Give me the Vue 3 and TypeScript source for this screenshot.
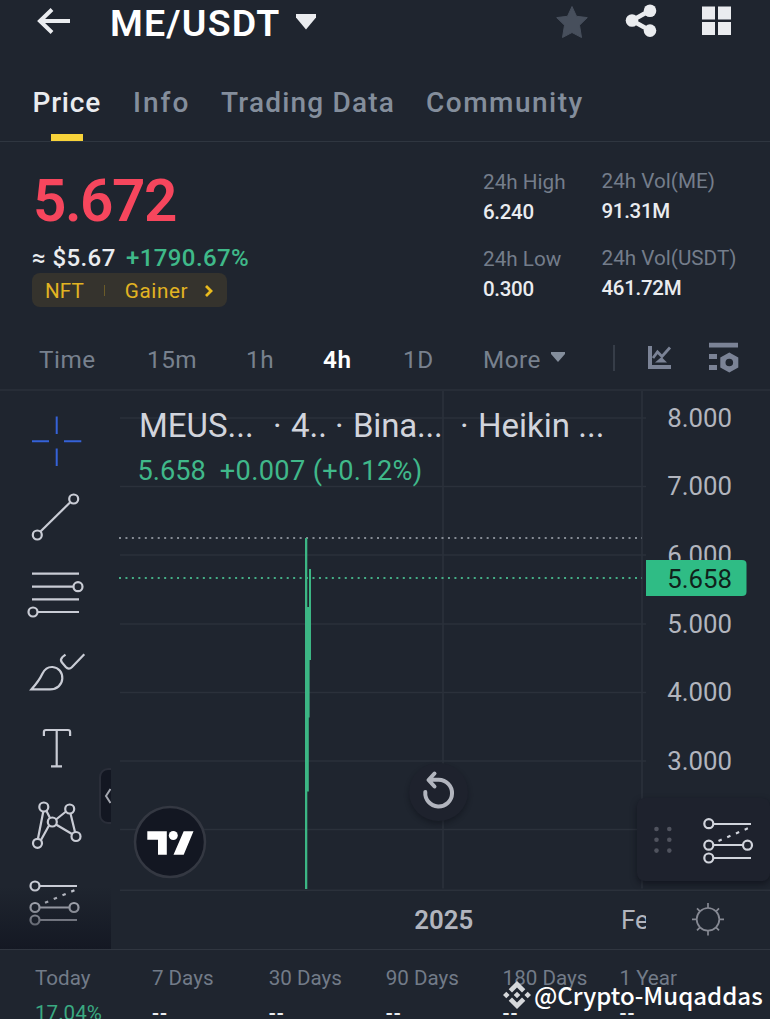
<script setup lang="ts">
interface Tool {
  name: string
  top: number
  paths: string[]
  dots?: string
  rings: [number, number][]
}

const tabs: string[] = ['Price', 'Info', 'Trading Data', 'Community']

const stats: [string, string][][] = [
  [['24h High', '6.240'], ['24h Low', '0.300']],
  [['24h Vol(ME)', '91.31M'], ['24h Vol(USDT)', '461.72M']],
]

const intervals: string[] = ['Time', '15m', '1h', '4h', '1D']

const tools: Tool[] = [
  { name: 'cross', top: 403, paths: ['M56.7 416.5V434M56.7 448.5V466M32 441.3H49M64 441.3H81.300'], rings: [] },
  { name: 'trend', top: 480, paths: ['M40.500 531.500L70 502.500'], rings: [[37.3, 535], [73.7, 499]] },
  { name: 'fib', top: 557, paths: ['M32 573.7H79M32 586.7H73.500M32 599.3H79M38 612H79'], rings: [[78, 586.7], [33, 612]] },
  {
    name: 'brush', top: 634, rings: [],
    paths: [
      'M31.500 689.300C38 682 40 679 42.500 673.500C45 668.500 49 666.800 52.500 667C59 667.500 62.500 672.500 62.300 678.500C62 685 57 689.300 50 689.300Z',
      'M65.500 654.700L62.500 657C60.600 658.800 60.500 660.500 61.800 662.300L65.800 667C67.600 669 70 669 71.800 667.300L84.300 654.300',
    ],
  },
  { name: 'text', top: 711, paths: ['M43.900 736V732Q43.900 730 46 730H68Q70.100 730 70.100 732V736M56.700 730V766.300M51 766.300H62'], rings: [] },
  {
    name: 'pattern', top: 788,
    paths: ['M46.500 811L50 818M56 819.500L66 811.500M43.300 811.500L38 838.500M41 840L49 825.500M56 824.500L72 834M70.500 813.500L75 832'],
    rings: [[43.8, 807], [69.7, 809], [52.3, 822], [37.500, 843.300], [76, 836.500]],
  },
  { name: 'projection', top: 865, paths: ['M40 886H77M40 907.500H69M40 920H77'], dots: 'M45 902.800L75 890', rings: [[35, 886], [35, 907.500], [74, 907.500], [35, 920]] },
]

const priceLabels = [8, 7, 6, 5, 4, 3].map((v, i) => ({ text: v.toFixed(3), y: 426.800 + i * 68.6 }))
const gridRows: number[] = [418, 486.500, 555, 624, 692.500, 761, 829.500]

const periods: [string, string][] = [
  ['Today', '17.04%'], ['7 Days', '--'], ['30 Days', '--'],
  ['90 Days', '--'], ['180 Days', '--'], ['1 Year', '--'],
]
</script>

<template>
  <div class="screen">
    <header class="header">
      <svg class="back" width="34" height="28" viewBox="37 7 34 28"><path d="M70 21H41M52 9.500L40 21L52 32.500" fill="none" stroke="#eaecef" stroke-width="4" /></svg>
      <h1>ME/USDT</h1>
      <svg class="caret" width="20" height="16" viewBox="0 0 20 16"><path d="M0 0H20V3.500L10 15.500L0 3.500Z" fill="#eaecef" /></svg>
      <svg class="star" width="34" height="34" viewBox="0 0 34 34"><path d="M17 1.500L21.500 11.300L32.300 12.600L24.500 20.200L26.500 32.500L17 27.500L7.500 32.500L9.500 20.200L1.700 12.600L12.500 11.300Z" fill="#474f5c" stroke="#474f5c" stroke-linejoin="round" /></svg>
      <svg class="share" width="32" height="34" viewBox="0 0 32 34"><path d="M25 6.500L7 16.500L25 26.500" fill="none" stroke="#eaecef" stroke-width="4.500" /><g fill="#eaecef"><circle cx="7" cy="16.500" r="6.300" /><circle cx="25" cy="6.800" r="6.300" /><circle cx="25" cy="26.600" r="6.300" /></g></svg>
      <svg class="apps" width="30" height="30" viewBox="0 0 30 30"><path d="M0 .5H13V13.500H0ZM16 .5H29V13.500H16ZM0 16H13V29H0ZM16 16H29V29H16Z" fill="#eaecef" /></svg>
    </header>

    <nav class="tabs">
      <span v-for="(tab, i) in tabs" :key="tab" :class="['tab', 'tab-' + i, { active: i === 0 }]">{{ tab }}</span>
    </nav>

    <section class="ticker">
      <div class="quote">
        <div class="price">5.672</div>
        <div class="sub"><span class="fiat">≈ $5.67</span><span class="change">+1790.67%</span></div>
        <div class="badge">
          <span>NFT</span><i></i><span class="gainer">Gainer</span>
          <svg width="10" height="14" viewBox="0 0 10 14"><path d="M2 2L7 7L2 12" fill="none" stroke="#eabb1e" stroke-width="2.800" /></svg>
        </div>
      </div>
      <div v-for="(col, c) in stats" :key="c" class="stats">
        <dl v-for="item in col" :key="item[0]"><dt>{{ item[0] }}</dt><dd>{{ item[1] }}</dd></dl>
      </div>
    </section>

    <nav class="intervals">
      <span v-for="item in intervals" :key="item" :class="{ on: item === '4h' }">{{ item }}</span>
      <span class="more">More<svg width="14" height="10" viewBox="0 0 14 10"><path d="M0 0H14V2L7 10L0 2Z" fill="#848e9c" /></svg></span>
      <i class="divider"></i>
      <svg width="25" height="25" viewBox="647 344 25 25"><g fill="none" stroke="#7b8396"><path d="M650 345V366H671" stroke-width="4" /><path d="M653 357L657.500 351L662 355.500L670 346.500" stroke-width="2.800" /></g><path d="M655 361.500L661.500 356L667 361.500Z" fill="#7b8396" /></svg>
      <svg width="32" height="32" viewBox="708 341 32 32"><path fill="#7b8396" fill-rule="evenodd" d="M709 342.700H738V347.500H709ZM709 354H717V359H709ZM709 365H717V370H709ZM729.300 352.500L738.300 357.500V367.500L729.300 372.500L720.300 367.500V357.500ZM729.300 358.700A3.800 3.800 0 1 0 729.300 366.300A3.800 3.800 0 1 0 729.300 358.700Z" /></svg>
    </nav>

    <section class="chart">
      <aside class="toolbox">
        <svg v-for="tool in tools" :key="tool.name" :class="['tool', tool.name]" width="111" height="77" :viewBox="`0 ${tool.top} 111 77`">
          <path v-for="d in tool.paths" :key="d" :d="d" />
          <path v-if="tool.dots" :d="tool.dots" class="dashes" />
          <circle v-for="(r, i) in tool.rings" :key="i" :cx="r[0]" :cy="r[1]" r="4.500" />
        </svg>
        <div class="fade"></div>
        <div class="collapse"><svg width="8" height="18" viewBox="0 0 8 18"><path d="M6.500 2L2 9L6.500 16" fill="none" stroke="#a3a6af" stroke-width="2" /></svg></div>
      </aside>
      <div class="plot">
        <svg class="canvas" width="659" height="558" viewBox="111 391 659 558">
          <g stroke="#2b313b" stroke-width="1.600">
            <path v-for="y in gridRows" :key="y" :d="`M120 ${y}H646`" />
            <path d="M443 391V888.500M642 391V888.500M120 890.300H770" />
          </g>
          <path d="M119 538H642" stroke="#858b94" stroke-width="2" stroke-dasharray="2 4.450" />
          <path d="M119 578H642" stroke="#44ae86" stroke-width="2" stroke-dasharray="2 4.450" />
          <path d="M305 538H307.300V607H309V569H311V660H309.600V717.500H308.800V791.500H307.300V889H305Z" fill="#3cb684" />
          <g class="axis">
            <text v-for="label in priceLabels" :key="label.text" x="667.300" :y="label.y">{{ label.text }}</text>
            <text x="414.300" y="929" class="year">2025</text>
          </g>
          <svg x="611" y="900" width="35" height="40"><text x="10" y="29" class="month">Feb</text></svg>
          <path d="M646 560H742Q746.500 560 746.500 564V592Q746.500 596 742 596H646Z" fill="#2fbc85" />
          <text x="667.300" y="587.500" class="last">5.658</text>
          <circle cx="170" cy="842" r="35" fill="#131722" stroke="#343842" stroke-width="2.500" />
          <g fill="#fff"><path d="M147.300 831.300H166.800V854.800H158V839.800H147.300ZM183.700 831.300H193.500L183.700 854.800H173.500Z" /><circle cx="173.300" cy="835.500" r="4.500" /></g>
          <g fill="none" stroke="#868993" stroke-width="1.700">
            <circle cx="708" cy="919.300" r="11.300" />
            <path d="M708 908V903M708 930.600V935.600M696.700 919.300H692M719.300 919.300H724M700 911.300L697 908.300M716 911.300L719 908.300M700 927.300L697 930.300M716 927.300L719 930.300" />
          </g>
        </svg>
        <div class="legend">
          <span class="sym">MEUS...</span><span class="sep">·</span><span class="res">4..</span><span class="sep">·</span><span class="exch">Bina...</span><span class="sep">·</span><span class="style">Heikin ...</span>
        </div>
        <div class="values"><span>5.658</span><span class="delta">+0.007 (+0.12%)</span></div>
        <div class="reset">
          <svg width="34" height="40" viewBox="422 770 34 40"><path d="M425.300 792A13.400 13.400 0 1 0 438.700 779.700H430M434.500 773.500L428.500 780L434.500 786.500" fill="none" stroke="#b2b5be" stroke-width="4" stroke-linecap="round" stroke-linejoin="round" /></svg>
        </div>
        <div class="floating">
          <svg width="133" height="83" viewBox="637 798 133 83">
            <g fill="#50535e"><circle v-for="n in 6" :key="n" :cx="n % 2 ? 656.500 : 669.300" :cy="829 + Math.floor((n - 1) / 2) * 10.800" r="2.300" /></g>
            <g fill="none" stroke="#d1d4dc" stroke-width="2.200"><path d="M713.500 824H751M713.500 845H743M713.500 858H751" /><path d="M718.500 841L749 827.800" stroke-dasharray="3.500 6" /><circle cx="708.800" cy="823.700" r="4.500" /><circle cx="708.800" cy="845.200" r="4.500" /><circle cx="747.500" cy="845.200" r="4.500" /><circle cx="708.800" cy="858" r="4.500" /></g>
          </svg>
        </div>
      </div>
    </section>

    <footer class="periods">
      <div v-for="(p, i) in periods" :key="p[0]"><span>{{ p[0] }}</span><b :class="{ up: i === 0 }">{{ p[1] }}</b></div>
    </footer>

    <div class="watermark">
      <svg width="28" height="28" viewBox="0 0 28 28"><path fill="#d5d7da" d="M14 0L22.300 8.300L19 11.600L14 6.600L9 11.600L5.700 8.300ZM14 28L22.300 19.700L19 16.400L14 21.400L9 16.400L5.700 19.700ZM14 10.700L17.300 14L14 17.300L10.700 14ZM3.300 10.700L6.600 14L3.300 17.300L0 14ZM24.700 10.700L28 14L24.700 17.300L21.400 14Z" /></svg>
      <span>@Crypto-Muqaddas</span>
    </div>
  </div>
</template>

<style>
body { background: #1f252f; }
</style>

<style scoped>
.screen { position: relative; width: 770px; height: 1019px; overflow: hidden; background: #1f252f; color: #eaecef; font-family: Roboto, "Liberation Sans", sans-serif; white-space: nowrap; }
svg { display: block; flex: none; }

.header { display: flex; align-items: flex-start; height: 46px; }
.header h1 { margin: 0; width: 186px; font-size: 37.5px; line-height: 46px; font-weight: 600; color: #fff; letter-spacing: 1.2px; }
.back { margin: 7px 39px 0 37px; }
.caret { margin-top: 14px; }
.star { margin: 5px 0 0 239px; }
.share { margin: 4px 0 0 36px; }
.apps { margin: 6px 0 0 45px; }

.tabs { display: grid; grid-template-columns: 100.5px 88px 205px auto; height: 95px; padding-left: 32.5px; border-bottom: 1px solid #2f3640; font-size: 28px; font-weight: 500; color: #848e9c; }
.tab { position: relative; padding-top: 19px; line-height: 76px; letter-spacing: 1.2px; }
.tab-0 { letter-spacing: 0.8px; }
.tab-1 { letter-spacing: 2px; }
.tab-3 { letter-spacing: 1.5px; }
.active { color: #eaecef; }
.active::after { content: ''; position: absolute; left: 18px; bottom: 0; width: 32.5px; height: 7px; background: #f8d33a; }

.ticker { display: flex; height: 188px; }
.quote { flex: none; width: 483px; padding: 29px 0 0 32px; box-sizing: border-box; }
.price { height: 60px; line-height: 60px; font-size: 58.5px; font-weight: 600; letter-spacing: -1.5px; color: #f6465d; margin-left: 1px; }
.sub { display: flex; margin-top: 12px; height: 30px; line-height: 30px; font-size: 24px; font-weight: 500; }
.fiat { width: 94px; letter-spacing: 0.4px; }
.change { color: #3fb989; letter-spacing: 0.4px; }
.badge { display: flex; align-items: center; width: 195px; height: 34px; box-sizing: border-box; padding: 1px 0 0 13px; border-radius: 8px; background: #35332d; color: #e2b322; font-size: 20.7px; }
.badge i { width: 1px; height: 11px; margin: 0 20px; background: #6b5b28; }
.gainer { letter-spacing: 0.6px; }
.badge svg { margin-left: 16px; }
.stats { flex: none; width: 118.5px; padding-top: 25px; font-size: 20.7px; line-height: 30px; }
.stats:last-child { width: 150px; padding-top: 24px; }
.stats dl { margin: 0 0 17px; }
.stats dt { color: #747d8b; }
.stats dd { margin: 0; font-weight: 500; letter-spacing: -0.3px; font-size: 20.5px; }

.intervals { display: grid; grid-template-columns: 108px 99px 77px 80px 80px 130px 34px 61px auto; align-items: center; height: 59px; padding-left: 39px; border-bottom: 2px solid #272d37; font-size: 24.3px; color: #78818e; }
.intervals span { letter-spacing: 0.5px; line-height: 59px; }
.intervals .on { color: #fff; font-weight: 600; }
.more { display: flex; }
.more svg { margin: 22px 0 0 10px; }
.divider { width: 2px; height: 26px; background: #363d48; margin-top: -4px; }
.intervals > svg { margin-top: -5px; }

.chart { display: flex; height: 558px; border-bottom: 1px solid #303640; }
.toolbox { position: relative; width: 111px; height: 558px; padding-top: 12px; box-sizing: border-box; overflow: hidden; }
.tool { fill: none; stroke: #c9ccd5; stroke-width: 2.2; }
.tool.cross { stroke: #3562d8; stroke-width: 2; }
.dashes { stroke-dasharray: 3.5 6; }
.fade { position: absolute; left: 0; bottom: 0; width: 111px; height: 62px; background: linear-gradient(rgba(19, 23, 34, 0), rgba(19, 23, 34, 0.9)); }
.collapse { position: absolute; left: 99px; top: 377px; width: 20px; height: 56px; box-sizing: border-box; padding: 17px 0 0 3px; border: 2px solid #2a2e39; border-radius: 9px; background: #131722; }
.plot { position: relative; width: 659px; }
.axis { font-size: 25.8px; fill: #b2b5be; }
.year { font-weight: 600; }
.month { font-size: 26px; fill: #b2b5be; }
.last { font-size: 25.8px; fill: #10211b; }
.legend { position: absolute; left: 28px; top: 15px; display: flex; line-height: 40px; font-size: 33px; color: #d1d4dc; }
.sym { width: 134px; }
.sep { width: 18px; }
.res { width: 44px; }
.exch { width: 107px; letter-spacing: -0.2px; }
.values { position: absolute; left: 26.5px; top: 60px; display: flex; gap: 14px; line-height: 40px; font-size: 27.2px; color: #40b88a; }
.delta { letter-spacing: 0.35px; }
.reset { position: absolute; left: 298px; top: 372px; display: flex; justify-content: center; padding-top: 7px; box-sizing: border-box; width: 59px; height: 58px; border-radius: 50%; background: #1e222d; box-shadow: 0 3px 5px rgba(10, 12, 20, 0.4); }
.floating { position: absolute; left: 526px; top: 407px; width: 133px; height: 83px; border-radius: 8px; background: #1e222d; box-shadow: 0 3px 6px rgba(10, 12, 20, 0.6); }

.periods { display: grid; grid-template-columns: repeat(6, 116.9px); padding: 12px 0 0 35px; font-size: 20.6px; }
.periods span { display: block; line-height: 32px; color: #727b88; }
.periods b { display: block; margin-top: 3px; line-height: 32px; font-weight: 500; letter-spacing: 1px; }
.periods .up { color: #3aa981; font-weight: 400; letter-spacing: 0; }

.watermark { position: absolute; left: 503px; top: 981px; display: flex; align-items: center; height: 28px; color: #fff; font: 500 24px/28px "Noto Sans CJK SC", "Noto Sans", sans-serif; }
.watermark span { margin-left: 3px; }
</style>
